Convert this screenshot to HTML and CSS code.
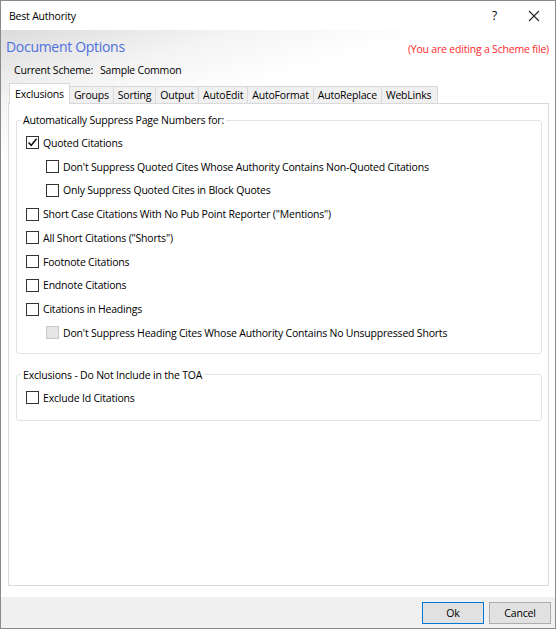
FILE: index.html
```html
<!DOCTYPE html>
<html>
  <head>
    <meta charset="utf-8" />
    <meta name="viewport" content="width=device-width, initial-scale=1" />
    <link rel="stylesheet" href="styles.css">
  </head>
  <body>
    <div class="window">
      <div class="titlebar">
        <span class="title">Best Authority</span>
        <span class="help">?</span>
        <span class="close">
          <svg width="12" height="12" viewBox="0 0 12 12"><path d="M1 1L11 11M11 1L1 11" stroke="#222" stroke-width="1.1" fill="none"/></svg>
        </span>
      </div>

      <div class="main">
        <div class="heading-row">
          <h1 class="heading">Document Options</h1>
          <span class="notice">(You are editing a Scheme file)</span>
        </div>
        <div class="scheme">
          <span class="scheme-label">Current Scheme:</span>
          <span>Sample Common</span>
        </div>

        <ul class="tabs">
          <li class="tab active">Exclusions</li>
          <li class="tab">Groups</li>
          <li class="tab">Sorting</li>
          <li class="tab">Output</li>
          <li class="tab">AutoEdit</li>
          <li class="tab">AutoFormat</li>
          <li class="tab">AutoReplace</li>
          <li class="tab">WebLinks</li>
        </ul>

        <div class="panel">
          <fieldset class="group">
            <legend>Automatically Suppress Page Numbers for:</legend>
            <div class="row"><span class="box checked"><svg width="11" height="11" viewBox="0 0 11 11"><path d="M1.5 5.5L4.2 8.3L9.6 1.8" stroke="#111" stroke-width="1.5" fill="none"/></svg></span>Quoted Citations</div>
            <div class="row sub"><span class="box"></span>Don't Suppress Quoted Cites Whose Authority Contains Non-Quoted Citations</div>
            <div class="row sub"><span class="box"></span>Only Suppress Quoted Cites in Block Quotes</div>
            <div class="row"><span class="box"></span>Short Case Citations With No Pub Point Reporter ("Mentions")</div>
            <div class="row"><span class="box"></span>All Short Citations ("Shorts")</div>
            <div class="row"><span class="box"></span>Footnote Citations</div>
            <div class="row"><span class="box"></span>Endnote Citations</div>
            <div class="row"><span class="box"></span>Citations in Headings</div>
            <div class="row sub"><span class="box disabled"></span>Don't Suppress Heading Cites Whose Authority Contains No Unsuppressed Shorts</div>
          </fieldset>

          <fieldset class="group">
            <legend>Exclusions - Do Not Include in the TOA</legend>
            <div class="row"><span class="box"></span>Exclude Id Citations</div>
          </fieldset>
        </div>
      </div>

      <div class="footer">
        <button class="btn btn-default">Ok</button>
        <button class="btn">Cancel</button>
      </div>
    </div>
  </body>
</html>
```

FILE: styles.css
```css
body,
html {
  margin: 0;
  padding: 0;
  background: #fff;
}
body {
  font-family: "Open Sans", "Noto Sans", sans-serif;
  font-size: 10.5px;
  letter-spacing: -0.2px;
  color: #000;
}

.window {
  width: 556px;
  height: 629px;
  box-sizing: border-box;
  border: 1px solid #8a8a8a;
  display: flex;
  flex-direction: column;
  background: #fff;
}

.titlebar {
  height: 29px;
  display: flex;
  align-items: center;
  padding-left: 8px;
  background: #fff;
}
.title {
  flex: 1;
}
.help {
  width: 20px;
  font-size: 12px;
  margin-right: 16px;
}
.close {
  width: 20px;
  margin-right: 7px;
  display: flex;
}

.main {
  flex: 1;
  display: flex;
  flex-direction: column;
  padding: 0 6px 11px 7px;
  background: linear-gradient(163deg, #dcdcdc 0%, #f4f4f4 10%, #fff 18%);
}

.heading-row {
  display: flex;
  justify-content: space-between;
  align-items: flex-end;
  height: 29px;
}
.heading {
  margin: 0 0 0 -2px;
  font-weight: normal;
  font-size: 14px;
  letter-spacing: -0.3px;
  color: #4e6fe0;
  line-height: 20px;
  padding-bottom: 2px;
}
.notice {
  color: #ff2a2a;
  padding-bottom: 3px;
}

.scheme {
  height: 21px;
  display: flex;
  align-items: center;
  padding-left: 6px;
  white-space: nowrap;
}
.scheme-label {
  padding-right: 7px;
}

.tabs {
  list-style: none;
  margin: 3px 0 -1px 1px;
  padding: 0;
  display: flex;
  align-items: flex-end;
  height: 21px;
  position: relative;
  z-index: 1;
}
.tab {
  height: 18px;
  line-height: 17px;
  box-sizing: border-box;
  padding: 0 4px;
  background: #f0f0f0;
  border: 1px solid #d9d9d9;
  border-left: none;
  text-align: center;
}
.tab.active {
  height: 21px;
  line-height: 20px;
  background: #fff;
  border-left: 1px solid #d9d9d9;
  border-bottom: none;
  padding: 0 5px;
}
.tab:last-child {
  padding-right: 6px;
}

.panel {
  flex: 1;
  border: 1px solid #d9d9d9;
  background: #fff;
  padding: 8px 6px 0 7px;
}

.group {
  margin: 0 0 13px;
  padding: 3px 0 8px 9px;
  border: 1px solid #dfe3e8;
  border-radius: 3px;
}
.group + .group {
  padding-bottom: 10px;
}
.group legend {
  padding: 0 2px;
  margin-left: -5px;
  line-height: 16px;
}

.row {
  display: flex;
  align-items: center;
  height: 23.75px;
}
.row.sub {
  padding-left: 20px;
}
.box {
  width: 13px;
  height: 13px;
  box-sizing: border-box;
  border: 1px solid #333;
  background: #fff;
  margin-right: 4px;
  display: flex;
  align-items: center;
  justify-content: center;
}
.box.disabled {
  border-color: #c9c9c9;
  background: #e6e6e6;
}

.footer {
  height: 31px;
  background: #f0f0f0;
  display: flex;
  justify-content: flex-end;
  align-items: center;
  gap: 5px;
  padding-right: 4px;
}
.btn {
  width: 62px;
  height: 22px;
  font-family: inherit;
  font-size: 10.5px;
  letter-spacing: -0.2px;
  background: #e1e1e1;
  border: 1px solid #adadad;
  color: #000;
  padding: 0;
}
.btn-default {
  border-color: #0078d7;
}
```
